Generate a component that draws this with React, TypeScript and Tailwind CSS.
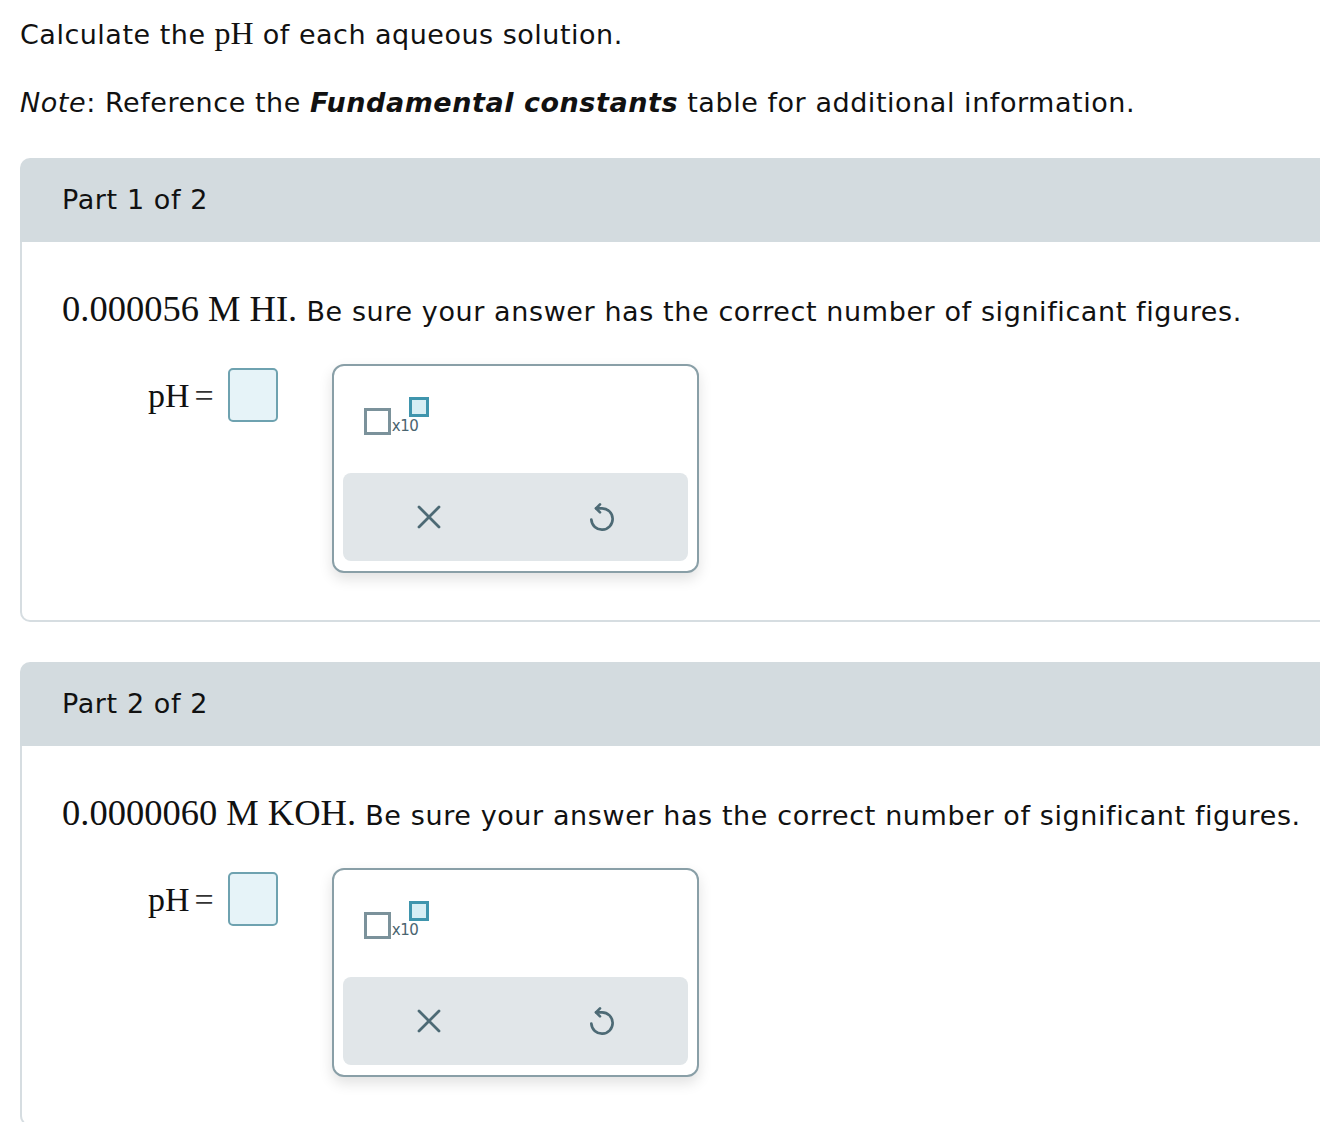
const sans = { fontFamily: '"DejaVu Sans", Verdana, sans-serif' }
const serif = { fontFamily: '"Liberation Serif", "Times New Roman", serif' }

function Sci() {
  return (
    <div className="flex items-end">
      <div className="h-[27px] w-[27px] border-[3px] border-[#7b929b] bg-white" />
      <span className="text-[15px] leading-none tracking-[-0.5px] text-[#4a6470] mb-[1px] ml-[1px]">x10</span>
      <div className="mb-[18px] -ml-[9px] h-[20px] w-[20px] border-[3px] border-[#3f95ad] bg-[#d7eef4]" />
    </div>
  )
}

function ClearIcon() {
  return (
    <svg width="26" height="26" viewBox="0 0 26 26" fill="none" stroke="#4d6a75" strokeWidth="2.8" strokeLinecap="round">
      <path d="M3 3L23 23M23 3L3 23" />
    </svg>
  )
}

function UndoIcon() {
  return (
    <svg width="32" height="32" viewBox="0 0 24 24" fill="none" stroke="#4d6a75" strokeWidth="2" strokeLinecap="round" strokeLinejoin="round">
      <path d="M7.5 5.5H12A8 8 0 1 1 4 14" />
      <path d="M10.5 2.5L7.5 5.5L10.5 8.5" />
    </svg>
  )
}

function Part({ n, conc, species }: { n: number; conc: string; species: string }) {
  return (
    <div className="w-[1340px] mb-[40px]">
      <div className="h-[84px] rounded-t-[10px] bg-[#d3dbdf] pl-[42px] flex items-center text-[27px] tracking-[0.6px] text-[#111]">
        Part {n} of 2
      </div>
      <div className="h-[380px] border-2 border-t-0 border-[#d6dde1] rounded-b-[10px] pl-[40px] pt-[47px]">
        <p className="text-[27px] tracking-[0.6px] text-[#111] whitespace-nowrap leading-[40px]">
          <span className="text-[36.5px] tracking-normal" style={serif}>{conc} M {species}.</span> Be sure your answer has the correct number of significant figures.
        </p>
        <div className="mt-[32px] flex items-start">
          <div className="ml-[86px] mt-[4px] flex items-center">
            <span className="text-[34px] text-[#111]" style={serif}>pH</span>
            <span className="ml-[5px] text-[34px] text-[#333]" style={serif}>=</span>
            <div className="ml-[14px] h-[54px] w-[50px] rounded-[5px] border-2 border-[#6ea2b0] bg-[#e6f3f8]" />
          </div>
          <div className="ml-[54px] w-[367px] h-[209px] rounded-[12px] border-2 border-[#899fa7] bg-white shadow-[0_6px_14px_rgba(0,0,0,0.12)] px-[9px] pt-[31px]">
            <div className="ml-[21px] h-[48px]">
              <Sci />
            </div>
            <div className="mt-[28px] h-[88px] rounded-[8px] bg-[#e1e6e9] flex items-center">
              <div className="flex-1 flex justify-center">
                <ClearIcon />
              </div>
              <div className="flex-1 flex justify-center">
                <UndoIcon />
              </div>
            </div>
          </div>
        </div>
      </div>
    </div>
  )
}

export default function App() {
  return (
    <div className="w-[1320px] h-[1122px] overflow-hidden bg-white" style={sans}>
      <div className="pl-[20px] pt-[13px]">
        <p className="text-[27px] tracking-[0.5px] text-[#111] leading-[40px]">
          Calculate the <span className="text-[32px] tracking-normal" style={serif}>pH</span> of each aqueous solution.
        </p>
        <p className="mt-[28px] text-[27px] tracking-[0.55px] text-[#111] leading-[40px]">
          <i>Note</i>: Reference the <b><i>Fundamental constants</i></b> table for additional information.
        </p>
        <div className="mt-[35px]">
          <Part n={1} conc="0.000056" species="HI" />
          <Part n={2} conc="0.0000060" species="KOH" />
        </div>
      </div>
    </div>
  )
}
